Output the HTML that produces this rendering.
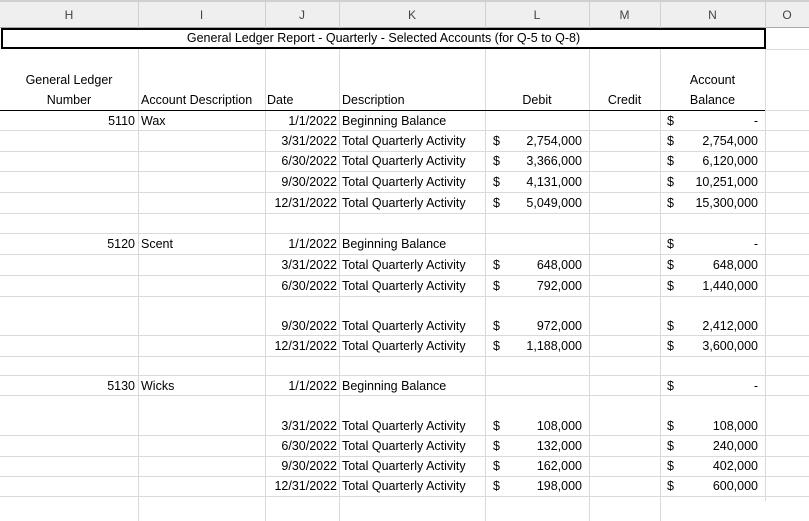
<!DOCTYPE html>
<html><head><meta charset="utf-8"><style>
*{margin:0;padding:0;box-sizing:border-box}
body{width:809px;height:501px;background:#fff;position:relative;overflow:hidden;font-family:"Liberation Sans",Arial,sans-serif;font-size:12.5px;color:#000}
.a{position:absolute;white-space:nowrap}
.v{position:absolute;top:29px;width:1px;height:472px;background:#dadada}
.h{position:absolute;left:0;width:809px;height:1px;background:#dadada}
.ch{position:absolute;top:2px;height:26px;line-height:26px;text-align:center;color:#444;font-size:12px}
.r{text-align:right}
</style></head><body>
<div class="a" style="left:0;top:0;width:809px;height:2px;background:#d0d0d0"></div>
<div class="a" style="left:0;top:2px;width:809px;height:26px;background:#efefef"></div>
<div class="a" style="left:0;top:27px;width:809px;height:1px;background:#a8a8a8"></div>
<div class="ch" style="left:0;width:138px">H</div>
<div class="ch" style="left:138px;width:127px">I</div>
<div class="ch" style="left:265px;width:74px">J</div>
<div class="ch" style="left:339px;width:146px">K</div>
<div class="ch" style="left:485px;width:104px">L</div>
<div class="ch" style="left:589px;width:71px">M</div>
<div class="ch" style="left:660px;width:105px">N</div>
<div class="ch" style="left:765px;width:44px">O</div>
<div class="a" style="left:138px;top:2px;width:1px;height:26px;background:#d0d0d0"></div>
<div class="a" style="left:265px;top:2px;width:1px;height:26px;background:#d0d0d0"></div>
<div class="a" style="left:339px;top:2px;width:1px;height:26px;background:#d0d0d0"></div>
<div class="a" style="left:485px;top:2px;width:1px;height:26px;background:#d0d0d0"></div>
<div class="a" style="left:589px;top:2px;width:1px;height:26px;background:#d0d0d0"></div>
<div class="a" style="left:660px;top:2px;width:1px;height:26px;background:#d0d0d0"></div>
<div class="a" style="left:765px;top:2px;width:1px;height:26px;background:#d0d0d0"></div>

<div class="v" style="left:138px;top:49px"></div>
<div class="v" style="left:265px;top:49px"></div>
<div class="v" style="left:339px;top:49px"></div>
<div class="v" style="left:485px;top:49px"></div>
<div class="v" style="left:589px;top:49px"></div>
<div class="v" style="left:660px;top:49px"></div>
<div class="v" style="left:765px"></div>
<div class="h" style="top:49px;left:765px;width:44px"></div>
<div class="h" style="top:130px"></div>
<div class="h" style="top:151px"></div>
<div class="h" style="top:171px"></div>
<div class="h" style="top:192px"></div>
<div class="h" style="top:213px"></div>
<div class="h" style="top:233px"></div>
<div class="h" style="top:254px"></div>
<div class="h" style="top:275px"></div>
<div class="h" style="top:296px"></div>
<div class="h" style="top:335px"></div>
<div class="h" style="top:356px"></div>
<div class="h" style="top:375px"></div>
<div class="h" style="top:395px"></div>
<div class="h" style="top:435px"></div>
<div class="h" style="top:456px"></div>
<div class="h" style="top:476px"></div>
<div class="h" style="top:496px"></div>
<div class="a" style="left:0;top:110px;width:765px;height:1px;background:#000"></div>
<div class="h" style="top:110px;left:765px;width:44px"></div>

<div class="a" style="left:1px;top:28px;width:765px;height:21px;border:2px solid #000;text-align:center;line-height:17px;font-size:12.5px">General Ledger Report - Quarterly - Selected Accounts (for Q-5 to Q-8)</div>

<div class="a" style="left:0;top:70px;width:138px;text-align:center;line-height:20px">General Ledger<br>Number</div>
<div class="a" style="left:141px;top:90px;line-height:20px">Account Description</div>
<div class="a" style="left:267px;top:90px;line-height:20px">Date</div>
<div class="a" style="left:342px;top:90px;line-height:20px">Description</div>
<div class="a" style="left:485px;top:90px;width:104px;text-align:center;line-height:20px">Debit</div>
<div class="a" style="left:589px;top:90px;width:71px;text-align:center;line-height:20px">Credit</div>
<div class="a" style="left:660px;top:70px;width:105px;text-align:center;line-height:20px">Account<br>Balance</div>

<div class="a r" style="left:60px;width:75px;top:111px;line-height:20px">5110</div>
<div class="a" style="left:141px;top:111px;line-height:20px">Wax</div>
<div class="a r" style="left:60px;width:75px;top:234px;line-height:20px">5120</div>
<div class="a" style="left:141px;top:234px;line-height:20px">Scent</div>
<div class="a r" style="left:60px;width:75px;top:376px;line-height:20px">5130</div>
<div class="a" style="left:141px;top:376px;line-height:20px">Wicks</div>

<div style="position:absolute;left:0;top:0">
<div class="a r" style="left:265px;width:72px;top:111px;line-height:20px">1/1/2022</div><div class="a" style="left:342px;top:111px;line-height:20px">Beginning Balance</div><div class="a" style="left:667px;top:111px;line-height:20px">$</div><div class="a r" style="left:680px;width:78px;top:111px;line-height:20px">-</div>

<div class="a r" style="left:265px;width:72px;top:131px;line-height:20px">3/31/2022</div><div class="a" style="left:342px;top:131px;line-height:20px">Total Quarterly Activity</div><div class="a" style="left:493px;top:131px;line-height:20px">$</div><div class="a r" style="left:500px;width:82px;top:131px;line-height:20px">2,754,000</div><div class="a" style="left:667px;top:131px;line-height:20px">$</div><div class="a r" style="left:680px;width:78px;top:131px;line-height:20px">2,754,000</div>

<div class="a r" style="left:265px;width:72px;top:151px;line-height:20px">6/30/2022</div><div class="a" style="left:342px;top:151px;line-height:20px">Total Quarterly Activity</div><div class="a" style="left:493px;top:151px;line-height:20px">$</div><div class="a r" style="left:500px;width:82px;top:151px;line-height:20px">3,366,000</div><div class="a" style="left:667px;top:151px;line-height:20px">$</div><div class="a r" style="left:680px;width:78px;top:151px;line-height:20px">6,120,000</div>

<div class="a r" style="left:265px;width:72px;top:172px;line-height:20px">9/30/2022</div><div class="a" style="left:342px;top:172px;line-height:20px">Total Quarterly Activity</div><div class="a" style="left:493px;top:172px;line-height:20px">$</div><div class="a r" style="left:500px;width:82px;top:172px;line-height:20px">4,131,000</div><div class="a" style="left:667px;top:172px;line-height:20px">$</div><div class="a r" style="left:680px;width:78px;top:172px;line-height:20px">10,251,000</div>

<div class="a r" style="left:265px;width:72px;top:193px;line-height:20px">12/31/2022</div><div class="a" style="left:342px;top:193px;line-height:20px">Total Quarterly Activity</div><div class="a" style="left:493px;top:193px;line-height:20px">$</div><div class="a r" style="left:500px;width:82px;top:193px;line-height:20px">5,049,000</div><div class="a" style="left:667px;top:193px;line-height:20px">$</div><div class="a r" style="left:680px;width:78px;top:193px;line-height:20px">15,300,000</div>

<div class="a r" style="left:265px;width:72px;top:234px;line-height:20px">1/1/2022</div><div class="a" style="left:342px;top:234px;line-height:20px">Beginning Balance</div><div class="a" style="left:667px;top:234px;line-height:20px">$</div><div class="a r" style="left:680px;width:78px;top:234px;line-height:20px">-</div>

<div class="a r" style="left:265px;width:72px;top:255px;line-height:20px">3/31/2022</div><div class="a" style="left:342px;top:255px;line-height:20px">Total Quarterly Activity</div><div class="a" style="left:493px;top:255px;line-height:20px">$</div><div class="a r" style="left:500px;width:82px;top:255px;line-height:20px">648,000</div><div class="a" style="left:667px;top:255px;line-height:20px">$</div><div class="a r" style="left:680px;width:78px;top:255px;line-height:20px">648,000</div>

<div class="a r" style="left:265px;width:72px;top:276px;line-height:20px">6/30/2022</div><div class="a" style="left:342px;top:276px;line-height:20px">Total Quarterly Activity</div><div class="a" style="left:493px;top:276px;line-height:20px">$</div><div class="a r" style="left:500px;width:82px;top:276px;line-height:20px">792,000</div><div class="a" style="left:667px;top:276px;line-height:20px">$</div><div class="a r" style="left:680px;width:78px;top:276px;line-height:20px">1,440,000</div>

<div class="a r" style="left:265px;width:72px;top:316px;line-height:20px">9/30/2022</div><div class="a" style="left:342px;top:316px;line-height:20px">Total Quarterly Activity</div><div class="a" style="left:493px;top:316px;line-height:20px">$</div><div class="a r" style="left:500px;width:82px;top:316px;line-height:20px">972,000</div><div class="a" style="left:667px;top:316px;line-height:20px">$</div><div class="a r" style="left:680px;width:78px;top:316px;line-height:20px">2,412,000</div>

<div class="a r" style="left:265px;width:72px;top:336px;line-height:20px">12/31/2022</div><div class="a" style="left:342px;top:336px;line-height:20px">Total Quarterly Activity</div><div class="a" style="left:493px;top:336px;line-height:20px">$</div><div class="a r" style="left:500px;width:82px;top:336px;line-height:20px">1,188,000</div><div class="a" style="left:667px;top:336px;line-height:20px">$</div><div class="a r" style="left:680px;width:78px;top:336px;line-height:20px">3,600,000</div>

<div class="a r" style="left:265px;width:72px;top:376px;line-height:20px">1/1/2022</div><div class="a" style="left:342px;top:376px;line-height:20px">Beginning Balance</div><div class="a" style="left:667px;top:376px;line-height:20px">$</div><div class="a r" style="left:680px;width:78px;top:376px;line-height:20px">-</div>

<div class="a r" style="left:265px;width:72px;top:416px;line-height:20px">3/31/2022</div><div class="a" style="left:342px;top:416px;line-height:20px">Total Quarterly Activity</div><div class="a" style="left:493px;top:416px;line-height:20px">$</div><div class="a r" style="left:500px;width:82px;top:416px;line-height:20px">108,000</div><div class="a" style="left:667px;top:416px;line-height:20px">$</div><div class="a r" style="left:680px;width:78px;top:416px;line-height:20px">108,000</div>

<div class="a r" style="left:265px;width:72px;top:436px;line-height:20px">6/30/2022</div><div class="a" style="left:342px;top:436px;line-height:20px">Total Quarterly Activity</div><div class="a" style="left:493px;top:436px;line-height:20px">$</div><div class="a r" style="left:500px;width:82px;top:436px;line-height:20px">132,000</div><div class="a" style="left:667px;top:436px;line-height:20px">$</div><div class="a r" style="left:680px;width:78px;top:436px;line-height:20px">240,000</div>

<div class="a r" style="left:265px;width:72px;top:456px;line-height:20px">9/30/2022</div><div class="a" style="left:342px;top:456px;line-height:20px">Total Quarterly Activity</div><div class="a" style="left:493px;top:456px;line-height:20px">$</div><div class="a r" style="left:500px;width:82px;top:456px;line-height:20px">162,000</div><div class="a" style="left:667px;top:456px;line-height:20px">$</div><div class="a r" style="left:680px;width:78px;top:456px;line-height:20px">402,000</div>

<div class="a r" style="left:265px;width:72px;top:476px;line-height:20px">12/31/2022</div><div class="a" style="left:342px;top:476px;line-height:20px">Total Quarterly Activity</div><div class="a" style="left:493px;top:476px;line-height:20px">$</div><div class="a r" style="left:500px;width:82px;top:476px;line-height:20px">198,000</div><div class="a" style="left:667px;top:476px;line-height:20px">$</div><div class="a r" style="left:680px;width:78px;top:476px;line-height:20px">600,000</div>
</div>
</body></html>
